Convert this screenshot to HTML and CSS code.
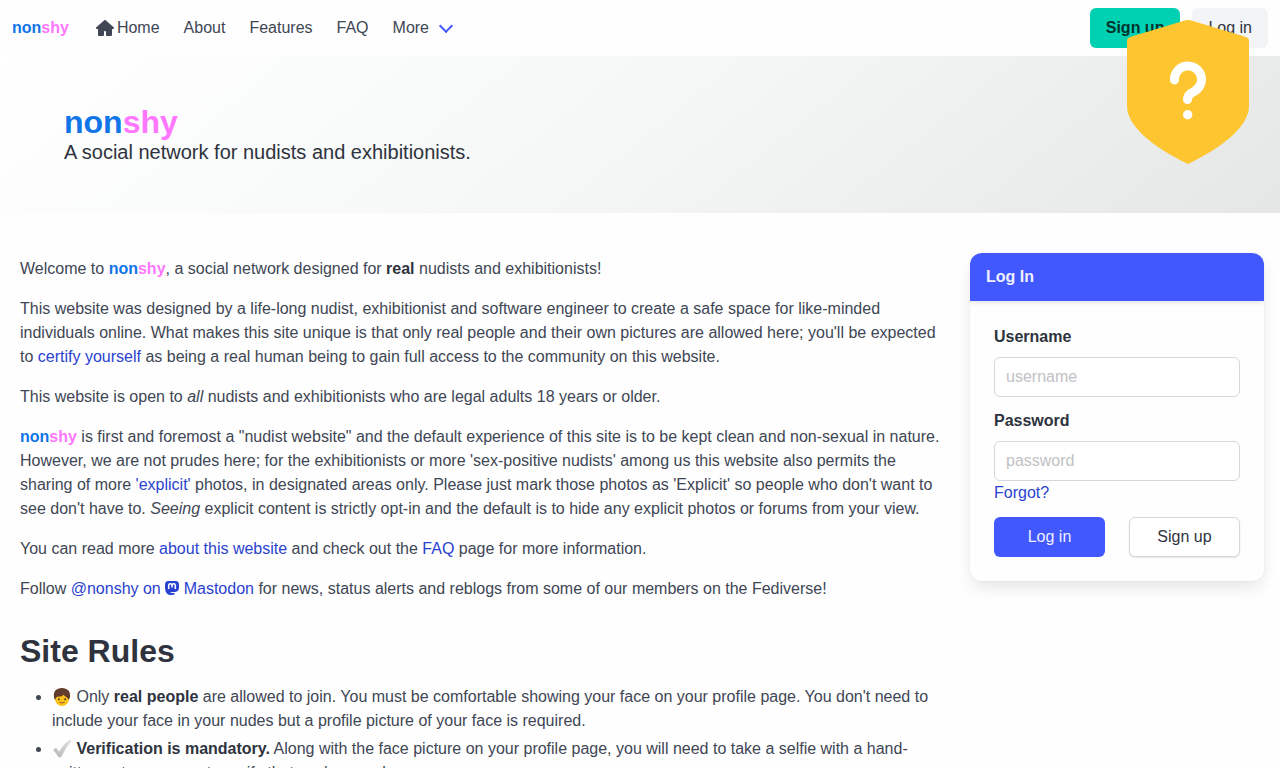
FILE: index.html
```html
<!DOCTYPE html>
<html lang="en">
<head>
<meta charset="utf-8">
<meta name="viewport" content="width=device-width, initial-scale=1">
<title>nonshy</title>
<link rel="stylesheet" href="styles.css">
</head>
<body>
<nav class="navbar" aria-label="Main">
  <a class="nav-item brand" href="#"><span class="non">non</span><span class="shy">shy</span></a>
  <div class="nav-links">
    <a class="nav-item home" href="#"><svg class="icon-home" viewBox="0 0 576 512" aria-hidden="true"><path d="M575.8 255.500c0 18-15 32.100-32 32.100h-32l.7 160.200c0 2.700-.2 5.400-.5 8.100V472c0 22.100-17.900 40-40 40H360c-22 0-40-18-40-40v-88c0-18-14-32-32-32s-32 14-32 32v88c0 22-18 40-40 40H104c-22 0-40-18-40-40V287.600H32c-18 0-32-14-32-32.100 0-9 3-17 10-24L266.400 8c7-7 15-8 22-8s15 2 21 7l255.400 224.500c8 7 12 15 11 24z"/></svg><span>Home</span></a>
    <a class="nav-item" href="#">About</a>
    <a class="nav-item" href="#">Features</a>
    <a class="nav-item" href="#">FAQ</a>
    <a class="nav-item more" href="#">More</a>
  </div>
  <div class="nav-buttons">
    <a class="button button-primary" href="#">Sign up</a>
    <a class="button button-light" href="#">Log in</a>
  </div>
</nav>

<svg class="shield" viewBox="0 0 122 145" role="img" aria-label="Not certified">
  <path fill="#fdc630" d="M61 0 Q63 0 66 1 L119 17 Q122 18 122 21 V86 C122 107 94 128 61 144 C28 128 0 107 0 86 V21 Q0 18 3 17 L56 1 Q59 0 61 0Z"/>
  <path d="M47.500 60 A13.500 13.500 0 1 1 67 71.500 Q60.500 74.500 60.500 79.500" fill="none" stroke="#fff" stroke-width="9" stroke-linecap="round" stroke-linejoin="round"/>
  <circle cx="60.700" cy="94.700" r="4.700" fill="#fff"/>
</svg>

<header class="hero">
  <h1 class="hero-title"><span class="non">non</span><span class="shy">shy</span></h1>
  <p class="hero-subtitle">A social network for nudists and exhibitionists.</p>
</header>

<div class="columns">
  <main class="content">
    <p>Welcome to <b class="non">non</b><b class="shy">shy</b>, a social network designed for <strong>real</strong> nudists and exhibitionists!</p>
    <p>This website was designed by a life-long nudist, exhibitionist and software engineer to create a safe space for like-minded individuals online. What makes this site unique is that only real people and their own pictures are allowed here; you'll be expected to <a href="#">certify yourself</a> as being a real human being to gain full access to the community on this website.</p>
    <p>This website is open to <em>all</em> nudists and exhibitionists who are legal adults 18 years or older.</p>
    <p><b class="non">non</b><b class="shy">shy</b> is first and foremost a "nudist website" and the default experience of this site is to be kept clean and non-sexual in nature. However, we are not prudes here; for the exhibitionists or more 'sex-positive nudists' among us this website also permits the sharing of more <a href="#">'explicit'</a> photos, in designated areas only. Please just mark those photos as 'Explicit' so people who don't want to see don't have to. <em>Seeing</em> explicit content is strictly opt-in and the default is to hide any explicit photos or forums from your view.</p>
    <p>You can read more <a href="#">about this website</a> and check out the <a href="#">FAQ</a> page for more information.</p>
    <p>Follow <a href="#">@nonshy on <svg class="icon-mastodon" viewBox="0 0 14 14" aria-hidden="true"><path class="body" d="M3.500 0H10.500Q14 0 14 3.500V6.500Q14 10.500 10 11H5Q5.500 12.300 9.500 12V13.500Q5 14.800 2.500 13Q0 11 0 7V3.500Q0 0 3.500 0Z"/><path class="letter" d="M3.700 8V4.500Q3.700 2.800 5.300 2.800T7 4.500V6.500M7 4.500Q7 2.800 8.600 2.800T10.300 4.500V8"/></svg> Mastodon</a> for news, status alerts and reblogs from some of our members on the Fediverse!</p>
    <h2>Site Rules</h2>
    <ul>
      <li><svg class="emoji" viewBox="0 0 40 40" role="img" aria-label="Person">
        <ellipse cx="20" cy="23" rx="16" ry="17" fill="#fcc21b"/>
        <path fill="#613b2b" d="M20 0C7 0 1 8 2 18c0 5 1 7 3 8 1-5 4-7 8-7 4 0 8-1 11-4 2 4 8 5 11 11 2-2 3-5 3-8C39 8 32 0 20 0Z"/>
        <circle cx="13" cy="25" r="2" fill="#333"/><circle cx="27" cy="25" r="2" fill="#333"/>
        <path d="M15 32q5 3 10 0" stroke="#95502c" stroke-width="2" fill="none" stroke-linecap="round"/></svg>
        Only <strong>real people</strong> are allowed to join. You must be comfortable showing your face on your profile page. You don't need to include your face in your nudes but a profile picture of your face is required.</li>
      <li><svg class="emoji" viewBox="0 0 40 40" role="img" aria-label="Check mark">
        <defs><linearGradient id="check" x1="0" y1="1" x2="1" y2="0"><stop offset="0" stop-color="#b4b4b4"/><stop offset="1" stop-color="#e4e4e4"/></linearGradient></defs>
        <path fill="url(#check)" stroke="#bdbdbd" d="M1 22q4-5 7-3l5 8Q24 9 37 1q4-1 2 2Q27 18 18 37q-3 3-6 0Q7 29 1 22Z"/></svg>
        <strong>Verification is mandatory.</strong> Along with the face picture on your profile page, you will need to take a selfie with a hand-written note on paper to verify that you're a real person.</li>
    </ul>
  </main>

  <aside class="sidebar">
    <form class="card">
      <h2 class="card-header">Log In</h2>
      <div class="card-body">
        <div class="field">
          <label for="username">Username</label>
          <input id="username" type="text" placeholder="username">
        </div>
        <div class="field">
          <label for="password">Password</label>
          <input id="password" type="password" placeholder="password">
          <a href="#">Forgot?</a>
        </div>
        <div class="actions">
          <button class="button button-link" type="submit">Log in</button>
          <a class="button button-outline" href="#">Sign up</a>
        </div>
      </div>
    </form>
  </aside>
</div>
</body>
</html>
```

FILE: styles.css
```css
*, *::before, *::after { box-sizing: border-box; }
body {
  margin: 0;
  background: #fefefe;
  color: #404654;
  font: 16px/24px "Liberation Sans", Arial, sans-serif;
}
h1, h2, p, ul { margin: 0; padding: 0; }
a { color: #2a42d0; text-decoration: none; }
strong { color: #2e333d; }
.non { color: #0f75e8; }
.shy { color: #ff77ff; }

.navbar { display: flex; min-height: 56px; background: #fefefe; }
.nav-links { display: flex; flex: 1; padding-left: 3px; }
.nav-item { display: flex; align-items: center; padding: 0 12px; color: #404654; }
.brand { font-weight: bold; }
.icon-home { width: 18px; height: 16px; margin-right: 3px; fill: #404654; }
.more::after {
  content: "";
  width: 10px;
  height: 10px;
  margin: -4px 4px 0 12px;
  border: solid #4258ff;
  border-width: 0 2px 2px 0;
  transform: rotate(45deg);
}
.nav-buttons { display: flex; align-items: center; gap: 12px; padding-right: 12px; }
.button {
  display: inline-flex;
  align-items: center;
  justify-content: center;
  height: 40px;
  padding: 0 16px;
  border: 0;
  border-radius: 6px;
  font: inherit;
  color: #2e333d;
}
.button-primary { background: #00d1b2; color: #00332b; font-weight: bold; }
.button-light { background: #f3f4f6; }

/* Certification badge floating over the top corner */
.shield { position: absolute; top: 20px; right: 31px; width: 122px; height: 145px; }

.hero {
  padding: 48px 64px;
  background: linear-gradient(141deg, #fff 0%, #f5f7f7 50%, #e5e6e6 100%);
  color: #2e333d;
}
.hero-title { font-size: 32px; line-height: 36px; }
.hero-subtitle { font-size: 20px; line-height: 25px; }

.columns { display: flex; gap: 28px; padding: 40px 16px 16px; }
.content { flex: 1; padding: 4px 0 0 4px; }
.content p { margin-bottom: 16px; }
.content h2 { margin: 32px 0 16px; font-size: 32px; line-height: 36px; color: #2e333d; }
.content ul { padding-left: 32px; }
.content li + li { margin-top: 4px; }
.icon-mastodon { width: 14px; height: 14px; vertical-align: -1px; }
.icon-mastodon .body { fill: #2a42d0; }
.icon-mastodon .letter { fill: none; stroke: #fff; stroke-width: 1.500px; }
.emoji { width: 20px; height: 18px; vertical-align: -4px; }

.sidebar { flex: none; width: calc(25% - 18px); min-width: 240px; }
.card {
  overflow: hidden;
  border-radius: 12px;
  background: #fefefe;
  box-shadow: 0 8px 16px -2px rgba(10, 10, 10, .1), 0 0 0 1px rgba(10, 10, 10, .02);
}
.card-header {
  padding: 12px 16px;
  background: #4258ff;
  color: #eef0ff;
  font-size: 16px;
  line-height: 24px;
  box-shadow: 0 2px 4px rgba(10, 10, 10, .1);
}
.card-body { padding: 24px; }
.field { margin-bottom: 12px; }
.field label { display: block; margin-bottom: 8px; font-weight: bold; color: #2e333d; }
.field input {
  display: block;
  width: 100%;
  height: 40px;
  padding: 0 11px;
  border: 1px solid #d5d7dc;
  border-radius: 6px;
  background: #fff;
  color: #2e333d;
  font: inherit;
}
.field input::placeholder { color: #bfc1c4; opacity: 1; }
.field a { display: block; }
.actions { display: grid; grid-template-columns: 1fr 1fr; gap: 24px; }
.button-link { background: #4258ff; color: #eef0ff; }
.button-outline {
  border: 1px solid #d5d7dc;
  background: #fff;
  box-shadow: 0 1px 2px rgba(10, 10, 10, .1);
}
```
